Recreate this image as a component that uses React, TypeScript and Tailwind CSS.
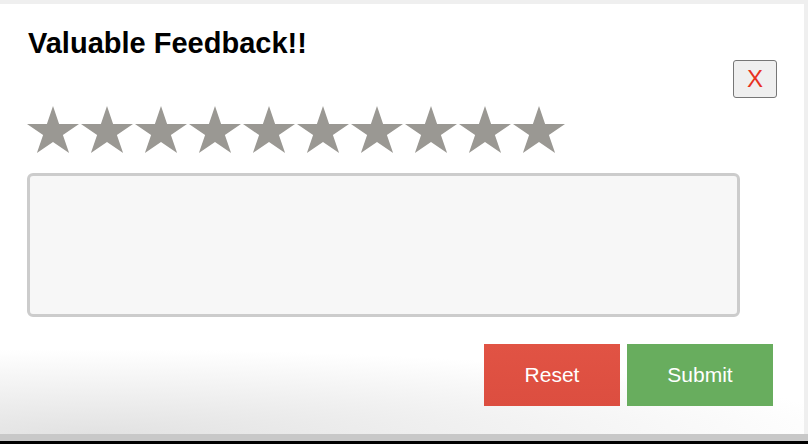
import { useState } from "react";

const STAR_POINTS =
	"26,0 32.1,18 52,18 35.9,29.1 42.1,47 26,35.9 9.9,47 16.1,29.1 0,18 19.9,18";

function Star({ filled }: { filled: boolean }) {
	return (
		<svg width="52" height="48" viewBox="0 0 52 48" className="shrink-0">
			<polygon points={STAR_POINTS} fill={filled ? "#f5b301" : "#9a9893"} />
		</svg>
	);
}

export default function App() {
	const [rating, setRating] = useState(0);
	const [text, setText] = useState("");

	return (
		<div className="w-[808px] h-[444px] bg-[#efefef] flex flex-col font-['Liberation_Sans',Arial,sans-serif] overflow-hidden">
			<div className="flex-1 pt-[4px] pr-[4px]">
				<div className="h-[430px] bg-[radial-gradient(ellipse_760px_85px_at_12%_100%,#e2e2e2,#ffffff)] px-[27px] pt-[23px] flex flex-col">
					<h1 className="ml-[1px] text-[29px] leading-[33px] font-bold text-black">
						Valuable Feedback!!
					</h1>

					<div className="flex justify-end">
						<button
							type="button"
							className="w-[44px] h-[38px] border border-[#767676] rounded-[3px] bg-[#efefef] text-[#e8321f] text-[24px] leading-none flex items-center justify-center"
						>
							X
						</button>
					</div>

					<div className="flex gap-[2px] mt-[8px]">
						{Array.from({ length: 10 }, (_, i) => (
							<button
								key={i}
								type="button"
								onClick={() => setRating(i + 1)}
								className="p-0"
							>
								<Star filled={i < rating} />
							</button>
						))}
					</div>

					<textarea
						value={text}
						onChange={(e) => setText(e.target.value)}
						className="mt-[19px] w-[713px] h-[144px] border-[3px] border-[#cccccc] rounded-[6px] bg-[#f7f7f7] resize-none outline-none p-2 text-base"
					/>

					<div className="flex justify-end gap-[7px] mt-[27px] pr-[4px]">
						<button
							type="button"
							onClick={() => {
								setRating(0);
								setText("");
							}}
							className="w-[136px] h-[62px] bg-[linear-gradient(#e15344,#dc4e40)] text-white text-[21px]"
						>
							Reset
						</button>
						<button
							type="button"
							className="w-[146px] h-[62px] bg-[#68ad5e] text-white text-[21px]"
						>
							Submit
						</button>
					</div>
				</div>
			</div>
			<div className="h-[7px] bg-[#c8c8c8]" />
			<div className="h-[3px] bg-black" />
		</div>
	);
}
